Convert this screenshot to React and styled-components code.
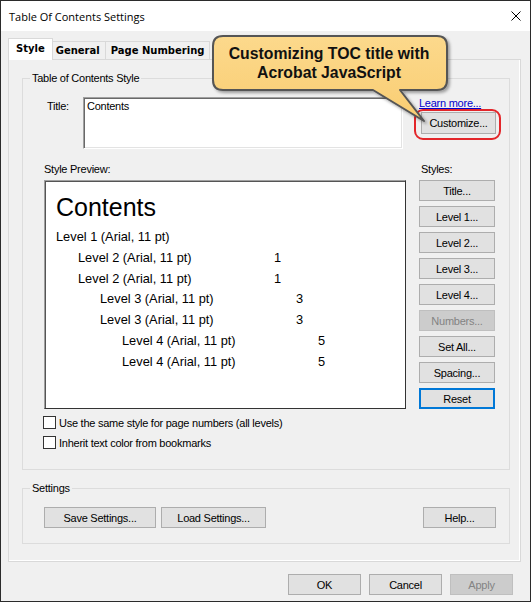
import React from 'react';
import styled, { createGlobalStyle } from 'styled-components';

const Global = createGlobalStyle`
  html, body { margin: 0; padding: 0; background: #ffffff; }
  body { font-family: "Liberation Sans", Arial, sans-serif; }
  * { box-sizing: border-box; }
`;

const Window = styled.div`
  position: relative;
  width: 531px;
  height: 602px;
  border: 1px solid #2b2b2b;
  background: #f0f0f0;
  display: flex;
  flex-direction: column;
  overflow: hidden;
`;

const TitleBar = styled.div`
  flex: none;
  height: 30px;
  background: #ffffff;
  display: flex;
  align-items: center;
  justify-content: space-between;
  padding: 0 9px 0 8px;
  font-family: "Open Sans", "Liberation Sans", sans-serif;
  font-size: 11px;
  color: #000;
`;

const Body = styled.div`
  flex: none;
  display: flex;
  flex-direction: column;
  padding: 7px 9px 0 7px;
`;

const TabStrip = styled.div`
  position: relative;
  z-index: 1;
  display: flex;
  align-items: flex-end;
  height: 21px;
  padding-left: 2px;
`;

const Tab = styled.div`
  position: relative;
  display: flex;
  align-items: center;
  justify-content: center;
  font-family: "DejaVu Sans", Verdana, sans-serif;
  font-weight: bold;
  font-size: 10px;
  color: #000;
  border: 1px solid #d9d9d9;
  border-bottom: none;
  height: ${p => (p.$active ? '22px' : '18px')};
  padding: ${p => (p.$active ? '0 7px 2px 7px' : '0 5px')};
  margin: ${p => (p.$active ? '0 -2px -1px -2px' : '0 0 0 -1px')};
  background: ${p => (p.$active ? '#ffffff' : '#f0f0f0')};
  z-index: ${p => (p.$active ? 2 : 1)};
  min-width: ${p => p.$min || 0}px;
`;

const Panel = styled.div`
  height: 503px;
  border: 1px solid #d9d9d9;
  background: #f0f0f0;
  box-shadow: inset 0 -1px 0 #ffffff, inset -1px 0 0 #ffffff;
  padding: 12px 10px 0 13px;
  display: flex;
  flex-direction: column;
`;

const Group = styled.fieldset`
  margin: ${p => p.$top || 0}px 0 0 0;
  padding: 0;
  border: 1px solid #dcdcdc;
  min-width: 0;
`;

const Legend = styled.legend`
  margin-left: 7px;
  padding: 0 2px;
  font-size: 11px;
  line-height: 12px;
  letter-spacing: -0.25px;
  color: #000;
`;

const GroupBody = styled.div`
  padding: ${p => p.$pad};
`;

const TitleRow = styled.div`
  display: grid;
  grid-template-columns: 39px 320px 1fr;
`;

const Label = styled.div`
  font-size: 11px;
  line-height: 13px;
  letter-spacing: -0.25px;
  color: #000;
  padding: ${p => p.$pad || 0};
`;

const TextBox = styled.div`
  height: 52px;
  background: #fff;
  border: 1px solid;
  border-color: #a0a0a0 #ffffff #ffffff #a0a0a0;
  box-shadow: inset 1px 1px 0 #696969, inset -1px -1px 0 #e3e3e3;
  padding: 2px 3px;
  font-size: 11px;
  line-height: 13px;
  letter-spacing: -0.25px;
  color: #000;
`;

const RightCol = styled.div`
  display: flex;
  flex-direction: column;
  align-items: flex-start;
  padding-left: 16px;
`;

const Link = styled.a`
  font-size: 11px;
  line-height: 13px;
  letter-spacing: -0.25px;
  color: #0000cc;
  text-decoration: underline;
  cursor: pointer;
`;

const HighlightWrap = styled.div`
  position: relative;
  margin-top: 2px;
  align-self: flex-end;
`;

const Ring = styled.div`
  position: absolute;
  left: -7px;
  top: -3px;
  right: -5px;
  bottom: -6px;
  border: 2px solid #e3262a;
  border-radius: 9px;
  pointer-events: none;
`;

const Button = styled.button`
  width: ${p => p.$w}px;
  height: ${p => p.$h || 21}px;
  margin: 0;
  padding: 0;
  font-family: "Liberation Sans", Arial, sans-serif;
  font-size: 11px;
  letter-spacing: -0.25px;
  color: ${p => (p.disabled ? '#838383' : '#000')};
  background: ${p => (p.disabled ? '#cccccc' : '#e1e1e1')};
  border: ${p => (p.$focus ? '2px solid #0078d7' : p.disabled ? '1px solid #bfbfbf' : '1px solid #adadad')};
  flex: none;
  ${p => (p.$push ? 'margin-left: auto;' : '')}
`;

const PreviewSection = styled.div`
  display: grid;
  grid-template-columns: 362px 76px;
  column-gap: 13px;
  margin-top: 14px;
`;

const PreviewBox = styled.div`
  height: 229px;
  background: #fff;
  border: 1px solid;
  border-color: #a0a0a0 #333333 #333333 #a0a0a0;
  box-shadow: inset 1px 1px 0 #555555;
  padding: 11px 0 0 11px;
  color: #000;
  font-family: "Liberation Sans", Arial, sans-serif;
`;

const PreviewHeading = styled.div`
  font-size: 25px;
  line-height: 30px;
  margin-bottom: 5px;
`;

const PreviewRow = styled.div`
  display: grid;
  grid-template-columns: 196px auto;
  padding-left: ${p => p.$indent}px;
  font-size: 12.8px;
  line-height: 20.8px;
  white-space: nowrap;
`;

const StyleButtons = styled.div`
  display: flex;
  flex-direction: column;
  gap: 5px;
`;

const CheckList = styled.div`
  display: flex;
  flex-direction: column;
  gap: 7px;
  margin-top: 7px;
`;

const CheckRow = styled.label`
  display: flex;
  align-items: center;
  gap: 3px;
  height: 13px;
  margin-left: -1px;
  font-size: 11px;
  letter-spacing: -0.25px;
  color: #000;
`;

const Box = styled.span`
  width: 13px;
  height: 13px;
  border: 1px solid #333;
  background: #fff;
  flex: none;
`;

const ButtonRow = styled.div`
  display: flex;
  gap: 5px;
`;

const Footer = styled.div`
  display: flex;
  justify-content: flex-end;
  gap: 8px;
  padding: 12px 17px 0 0;
`;

const Callout = styled.div`
  position: absolute;
  left: 210px;
  top: 33px;
  width: 240px;
  height: 92px;
`;

const CalloutShape = styled.svg`
  position: absolute;
  inset: 0;
  overflow: visible;
`;

const CalloutText = styled.div`
  position: relative;
  width: 236px;
  padding-top: 10px;
  text-align: center;
  font-family: "Liberation Sans", Arial, sans-serif;
  font-weight: bold;
  font-size: 15.8px;
  line-height: 19px;
  color: #111;
`;

const rows = [
  { level: 1, n: '' },
  { level: 2, n: '1' },
  { level: 2, n: '1' },
  { level: 3, n: '3' },
  { level: 3, n: '3' },
  { level: 4, n: '5' },
  { level: 4, n: '5' },
];

const styleButtons = ['Title...', 'Level 1...', 'Level 2...', 'Level 3...', 'Level 4...', 'Numbers...', 'Set All...', 'Spacing...', 'Reset'];

export default function App() {
  return (
    <>
      <Global />
      <Window>
        <TitleBar>
          <span>Table Of Contents Settings</span>
          <svg width="10" height="10" viewBox="0 0 10 10">
            <path d="M0.5 0.5 L9.5 9.5 M9.5 0.5 L0.5 9.5" stroke="#000" strokeWidth="1" />
          </svg>
        </TitleBar>
        <Body>
          <TabStrip>
            <Tab $active>Style</Tab>
            <Tab>General</Tab>
            <Tab $min={102}>Page Numbering</Tab>
          </TabStrip>
          <Panel>
            <Group>
              <Legend>Table of Contents Style</Legend>
              <GroupBody $pad="13px 13px 20px 21px">
                <TitleRow>
                  <Label $pad="3px 0 0 3px">Title:</Label>
                  <TextBox>Contents</TextBox>
                  <RightCol>
                    <Link>Learn more...</Link>
                    <HighlightWrap>
                      <Button $w={75} $h={22}>Customize...</Button>
                      <Ring />
                    </HighlightWrap>
                  </RightCol>
                </TitleRow>
                <PreviewSection>
                  <Label $pad="0 0 4px 0">Style Preview:</Label>
                  <Label $pad="0 0 4px 2px">Styles:</Label>
                  <PreviewBox>
                    <PreviewHeading>Contents</PreviewHeading>
                    {rows.map((r, i) => (
                      <PreviewRow key={i} $indent={(r.level - 1) * 22}>
                        <span>Level {r.level} (Arial, 11 pt)</span>
                        <span>{r.n}</span>
                      </PreviewRow>
                    ))}
                  </PreviewBox>
                  <StyleButtons>
                    {styleButtons.map(b => (
                      <Button key={b} $w={76} disabled={b === 'Numbers...'} $focus={b === 'Reset'}>{b}</Button>
                    ))}
                  </StyleButtons>
                </PreviewSection>
                <CheckList>
                  <CheckRow><Box />Use the same style for page numbers (all levels)</CheckRow>
                  <CheckRow><Box />Inherit text color from bookmarks</CheckRow>
                </CheckList>
              </GroupBody>
            </Group>
            <Group $top={12}>
              <Legend>Settings</Legend>
              <GroupBody $pad="13px 13px 15px 21px">
                <ButtonRow>
                  <Button $w={112}>Save Settings...</Button>
                  <Button $w={105}>Load Settings...</Button>
                  <Button $w={73} $push>Help...</Button>
                </ButtonRow>
              </GroupBody>
            </Group>
          </Panel>
        </Body>
        <Footer>
          <Button $w={73}>OK</Button>
          <Button $w={73}>Cancel</Button>
          <Button $w={63} disabled>Apply</Button>
        </Footer>
        <Callout>
          <CalloutShape width="240" height="92" viewBox="0 0 240 92">
            <defs>
              <linearGradient id="cg" x1="0" y1="0" x2="0" y2="1">
                <stop offset="0" stopColor="#fcd98c" />
                <stop offset="1" stopColor="#f9cd72" />
              </linearGradient>
              <filter id="sh" x="-10%" y="-10%" width="130%" height="140%">
                <feDropShadow dx="2" dy="2" stdDeviation="1.6" floodColor="#000" floodOpacity="0.35" />
              </filter>
            </defs>
            <path
              d="M12 2 H226 Q236 2 236 12 V46 Q236 56 226 56 H189 L213 87 L162 56 H12 Q2 56 2 46 V12 Q2 2 12 2 Z"
              fill="url(#cg)"
              stroke="#555"
              strokeWidth="2"
              strokeLinejoin="round"
              filter="url(#sh)"
            />
          </CalloutShape>
          <CalloutText>
            Customizing TOC title with<br />Acrobat JavaScript
          </CalloutText>
        </Callout>
      </Window>
    </>
  );
}
